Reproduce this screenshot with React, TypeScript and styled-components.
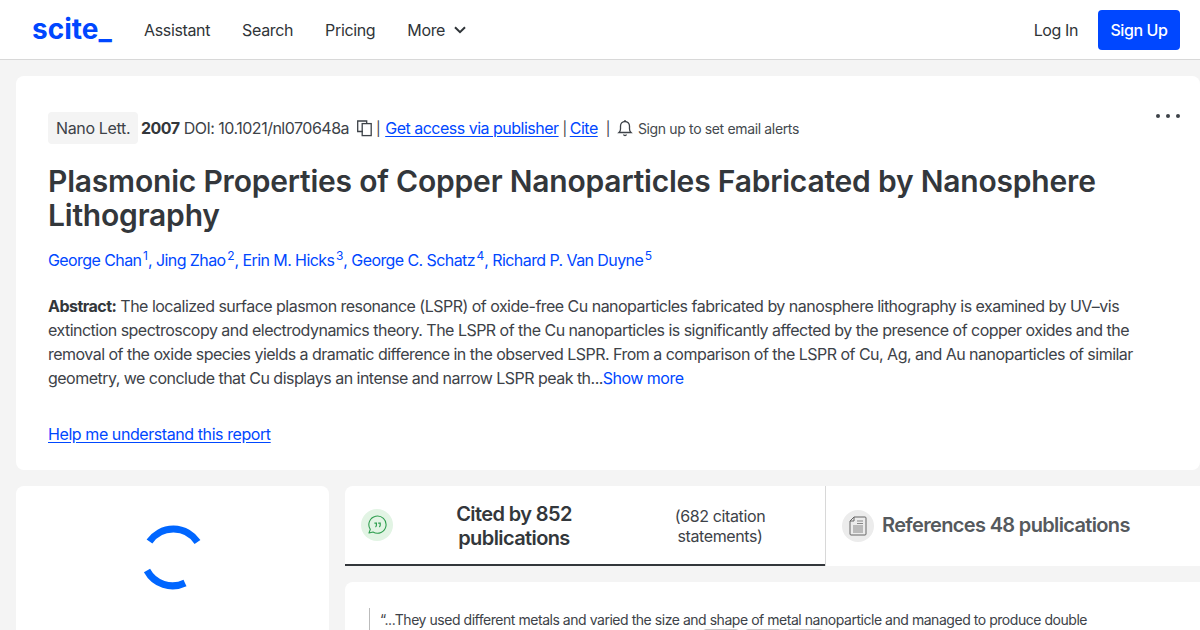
import type { FC } from "react";
import styled, { createGlobalStyle } from "styled-components";

const GlobalStyle = createGlobalStyle`
  html, body {
    margin: 0;
    padding: 0;
    height: 630px;
    overflow: hidden;
    background: #f4f4f4;
    font-family: Inter, "Liberation Sans", sans-serif;
  }
  * { box-sizing: border-box; }
`;

const Header = styled.header`
  height: 60px;
  background: #fff;
  border-bottom: 1px solid #d8d8d8;
  display: flex;
  align-items: center;
  padding: 0 20px 0 32px;
`;

const Logo = styled.div`
  color: #0047ff;
  font-size: 28px;
  font-weight: 700;
  line-height: 1;
  width: 112px;
  margin-top: -2px;
`;

const Nav = styled.nav`
  display: flex;
  align-items: center;
  gap: 32px;
  flex: 1;
`;

const NavItem = styled.a`
  display: flex;
  align-items: center;
  gap: 9px;
  color: #2f3438;
  font-size: 16px;
  letter-spacing: -0.35px;
`;

const LogIn = styled.a`
  color: #2f3438;
  font-size: 16px;
  letter-spacing: -0.4px;
  margin-right: 20px;
`;

const SignUp = styled.button`
  width: 82px;
  height: 40px;
  border: 0;
  border-radius: 4px;
  background: #0047ff;
  color: #fff;
  font: 500 16px Inter, sans-serif;
  letter-spacing: -0.4px;
`;

const Page = styled.main`
  height: 570px;
  overflow: hidden;
  padding: 16px 0 0 16px;
  display: flex;
  flex-direction: column;
  gap: 16px;
`;

const PaperCard = styled.section`
  position: relative;
  height: 394px;
  flex-shrink: 0;
  background: #fff;
  border-radius: 8px;
  padding: 36px 32px 0;
`;

const MoreDots = styled.div`
  position: absolute;
  top: 38px;
  right: 20px;
  display: flex;
  gap: 6px;
  span {
    width: 4px;
    height: 4px;
    border-radius: 50%;
    background: #3d4248;
  }
`;

const MetaRow = styled.div`
  display: flex;
  align-items: center;
  height: 32px;
  font-size: 16px;
  letter-spacing: -0.5px;
  color: #3d4248;
  white-space: nowrap;
`;

const Journal = styled.span`
  display: flex;
  align-items: center;
  height: 32px;
  width: 90px;
  padding: 0 8px;
  margin-right: 3px;
  background: #f4f4f4;
  border-radius: 4px;
  letter-spacing: -0.35px;
`;

const Year = styled.strong`
  font-weight: 700;
  margin-right: 4px;
  color: #33373b;
`;

const TextLink = styled.a`
  color: #0047ff;
  text-decoration: underline;
  text-underline-offset: 2px;
`;

const Divider = styled.span<{ $left: number; $right: number }>`
  margin: 0 ${({ $right }) => $right}px 0 ${({ $left }) => $left}px;
  font-size: 14px;
`;

const Alert = styled.span`
  font-size: 14px;
  letter-spacing: -0.35px;
  margin-left: 5px;
  color: #44494e;
`;

const Title = styled.h1`
  margin: 20px 0 0;
  font-size: 30px;
  line-height: 34px;
  font-weight: 600;
  letter-spacing: -0.2px;
  color: #33373b;
`;

const Authors = styled.div`
  margin-top: 16px;
  font-size: 16px;
  line-height: 24px;
  letter-spacing: -0.58px;
  color: #0047ff;
  sup {
    font-size: 12px;
    line-height: 0;
    margin-left: 1.6px;
    letter-spacing: 0;
  }
`;

const Abstract = styled.p`
  margin: 22px 0 0;
  width: 1100px;
  font-size: 16px;
  line-height: 24px;
  letter-spacing: -0.52px;
  color: #3d4248;
  strong {
    font-weight: 700;
    color: #33373b;
  }
`;

const ShowMore = styled.a`
  color: #0047ff;
  margin-left: -4px;
`;

const HelpLink = styled(TextLink)`
  display: block;
  margin-top: 32px;
  font-size: 16px;
  line-height: 24px;
  letter-spacing: -0.42px;
`;

const Columns = styled.div`
  display: flex;
  gap: 16px;
  flex: 1;
  min-height: 0;
`;

const Sidebar = styled.aside`
  width: 313px;
  background: #fff;
  border-radius: 8px 8px 0 0;
  display: flex;
  justify-content: center;
  padding-top: 37px;
`;

const Content = styled.div`
  flex: 1;
  display: flex;
  flex-direction: column;
  gap: 16px;
`;

const Tabs = styled.div`
  display: flex;
  height: 80px;
  flex-shrink: 0;
`;

const ActiveTab = styled.div`
  width: 480px;
  background: #fff;
  border-bottom: 2px solid #33373b;
  border-top-left-radius: 8px;
  display: flex;
  align-items: center;
  padding-left: 16px;
`;

const IdleTab = styled.div`
  flex: 1;
  background: #fff;
  border-left: 1px solid #d8d8d8;
  display: flex;
  align-items: center;
  padding-left: 16px;
`;

const IconCircle = styled.span<{ $bg: string }>`
  width: 32px;
  height: 32px;
  border-radius: 50%;
  background: ${({ $bg }) => $bg};
  display: flex;
  align-items: center;
  justify-content: center;
  flex-shrink: 0;
`;

const CitedLabel = styled.div`
  width: 180px;
  margin: 2px 0 0 31px;
  text-align: center;
  font-size: 20px;
  line-height: 24px;
  font-weight: 600;
  letter-spacing: -0.6px;
  color: #33373b;
`;

const CitedCount = styled.div`
  width: 120px;
  margin: 2px 0 0 56px;
  text-align: center;
  font-size: 16px;
  line-height: 20px;
  letter-spacing: -0.38px;
  color: #3d4248;
`;

const RefLabel = styled.div`
  margin: -2px 0 0 8px;
  font-size: 20px;
  font-weight: 600;
  letter-spacing: -0.65px;
  color: #55595d;
`;

const Statements = styled.div`
  flex: 1;
  overflow: hidden;
  background: #fff;
  border-top-left-radius: 8px;
  padding: 26px 24px 0;
`;

const Quote = styled.blockquote`
  margin: 0;
  padding: 0 0 0 10px;
  border-left: 1px solid #bbb;
  font-size: 14px;
  line-height: 24px;
  letter-spacing: -0.46px;
  color: #3d4248;
  white-space: nowrap;
`;

const ChipRow = styled.div`
  display: flex;
  gap: 6px;
  margin: -3px 0 0 323px;
`;

const Chip = styled.span`
  width: 36px;
  height: 14px;
  background: #fff;
  border: 1px solid #c8c8c8;
  border-radius: 3px;
`;

const CopyIcon: FC = () => (
  <svg width="18" height="18" viewBox="0 0 18 18" fill="none" stroke="#3d4248" strokeWidth="1.3" style={{ marginLeft: 7 }}>
    <path d="M7 12.5H1.7V2h9v2.5" />
    <rect x="6.2" y="4.6" width="9" height="12" />
  </svg>
);

const BellIcon: FC = () => (
  <svg width="16" height="18" viewBox="0 0 16 18" fill="none" stroke="#3d4248" strokeWidth="1.3">
    <path d="M2 13.5c1.2-1 1.5-2 1.5-3.5V7a4.5 4.5 0 0 1 9 0v3c0 1.5.3 2.5 1.5 3.5z" />
    <path d="M6.5 15.5a1.6 1.6 0 0 0 3 0" />
    <path d="M8 1v1.4" />
  </svg>
);

const ChevronIcon: FC = () => (
  <svg width="12" height="8" viewBox="0 0 12 8" fill="none" stroke="#2f3438" strokeWidth="2">
    <path d="M1 1.2l5 5 5-5" />
  </svg>
);

const QuoteIcon: FC = () => (
  <svg width="20" height="20" viewBox="0 0 20 20" fill="none" stroke="#2f9e4f" strokeWidth="1.1">
    <path d="M2 18l1.3-3.6A8.6 8.6 0 1 1 6 17z" strokeLinejoin="round" />
    <path d="M7.4 8.2h2v2c0 .9-.4 1.4-1 1.7M11.2 8.2h2v2c0 .9-.4 1.4-1 1.7" strokeWidth="1.2" />
  </svg>
);

const DocIcon: FC = () => (
  <svg width="18" height="20" viewBox="0 0 18 20" fill="none" stroke="#666" strokeWidth="1">
    <path d="M5 1h11a1 1 0 0 1 1 1v16a1 1 0 0 1-1 1H2a1 1 0 0 1-1-1V5z" />
    <path d="M5 1v4H1" />
    <path d="M8 5h6M8 7.5h6M4 10h10M4 12h10M4 14h10M4 16h10" stroke="#888" />
  </svg>
);

const Spinner: FC = () => (
  <svg width="68" height="68" viewBox="0 0 68 68" fill="none" stroke="#0066ff" strokeWidth="7">
    <path d="M10.5 18.5A29 29 0 0 1 58.5 19" />
    <path d="M8 47.5A29 29 0 0 0 46 60" />
  </svg>
);

const authors = ["George Chan", "Jing Zhao", "Erin M. Hicks", "George C. Schatz", "Richard P. Van Duyne"];

const App: FC = () => (
  <>
    <GlobalStyle />
    <Header>
      <Logo>scite_</Logo>
      <Nav>
        <NavItem>Assistant</NavItem>
        <NavItem>Search</NavItem>
        <NavItem>Pricing</NavItem>
        <NavItem>
          More <ChevronIcon />
        </NavItem>
      </Nav>
      <LogIn>Log In</LogIn>
      <SignUp>Sign Up</SignUp>
    </Header>
    <Page>
      <PaperCard>
        <MoreDots>
          <span />
          <span />
          <span />
        </MoreDots>
        <MetaRow>
          <Journal>Nano Lett.</Journal>
          <Year>2007</Year>
          DOI: 10.1021/nl070648a
          <CopyIcon />
          <Divider $left={2} $right={5}>|</Divider>
          <TextLink>Get access via publisher</TextLink>
          <Divider $left={4} $right={3}>|</Divider>
          <TextLink>Cite</TextLink>
          <Divider $left={8} $right={7}>|</Divider>
          <BellIcon />
          <Alert>Sign up to set email alerts</Alert>
        </MetaRow>
        <Title>
          Plasmonic Properties of Copper Nanoparticles Fabricated by Nanosphere
          <br />
          Lithography
        </Title>
        <Authors>
          {authors.map((name, i) => (
            <span key={name}>
              {name}
              <sup>{i + 1}</sup>
              {i < authors.length - 1 ? ", " : ""}
            </span>
          ))}
        </Authors>
        <Abstract>
          <strong>Abstract:</strong> The localized surface plasmon resonance (LSPR) of oxide-free Cu nanoparticles
          fabricated by nanosphere lithography is examined by UV–vis extinction spectroscopy and electrodynamics theory.
          The LSPR of the Cu nanoparticles is significantly affected by the presence of copper oxides and the removal of
          the oxide species yields a dramatic difference in the observed LSPR. From a comparison of the LSPR of Cu, Ag,
          and Au nanoparticles of similar geometry, we conclude that Cu displays an intense and narrow LSPR peak th...{" "}
          <ShowMore>Show more</ShowMore>
        </Abstract>
        <HelpLink>Help me understand this report</HelpLink>
      </PaperCard>
      <Columns>
        <Sidebar>
          <Spinner />
        </Sidebar>
        <Content>
          <Tabs>
            <ActiveTab>
              <IconCircle $bg="#e2f4e4">
                <QuoteIcon />
              </IconCircle>
              <CitedLabel>
                Cited by 852
                <br />
                publications
              </CitedLabel>
              <CitedCount>
                (682 citation
                <br />
                statements)
              </CitedCount>
            </ActiveTab>
            <IdleTab>
              <IconCircle $bg="#ececec">
                <DocIcon />
              </IconCircle>
              <RefLabel>References 48 publications</RefLabel>
            </IdleTab>
          </Tabs>
          <Statements>
            <Quote>
              “...They used different metals and varied the size and shape of metal nanoparticle and managed to produce double
              <ChipRow>
                <Chip />
                <Chip />
                <Chip />
              </ChipRow>
            </Quote>
          </Statements>
        </Content>
      </Columns>
    </Page>
  </>
);

export default App;
